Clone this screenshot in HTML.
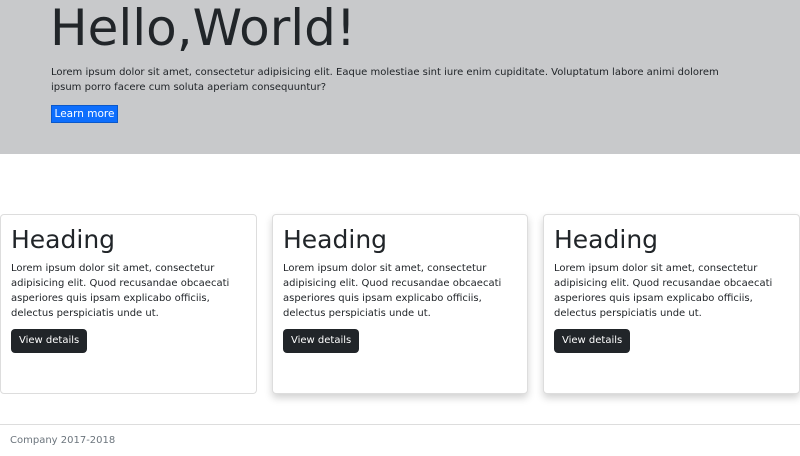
<!DOCTYPE html>
<html><head><style>
*{margin:0;padding:0;box-sizing:border-box}
body{width:800px;height:450px;overflow:hidden;font-family:"DejaVu Sans","Liberation Sans",sans-serif;color:#212529;background:#fff;font-size:10px;line-height:15px}
.hero{position:absolute;left:0;top:0;width:800px;height:154px;background:#c8c9cb}
.hero h1{position:absolute;left:50px;top:-3px;font-size:50px;line-height:62px;font-weight:400}
.hero p{position:absolute;left:51px;top:65px;width:685px}
.btn1{position:absolute;left:51px;top:105px;width:67px;height:18px;background:#0d6efd;color:#fff;font-size:10.5px;line-height:17px;text-align:center;border:1px solid #0a58ca}
.card{position:absolute;top:214px;height:180px;background:#fff;border:1px solid #ddd;border-radius:4px;padding:0 10px}
.card.s{box-shadow:0 4px 8px rgba(0,0,0,.18)}
.card h2{font-size:25px;font-weight:400;line-height:30px;margin-top:10px;margin-bottom:6px}
.card p{width:236px}
.card .b{display:inline-block;margin-top:8px;background:#212529;color:#fff;border-radius:4px;padding:0 8px;height:24px;line-height:24px}
.foot{position:absolute;top:424px;left:0;width:800px;border-top:1px solid #ddd;padding:8px 10px;color:#6c757d}
</style></head><body>
<div class="hero"><h1>Hello,World!</h1>
<p>Lorem ipsum dolor sit amet, consectetur adipisicing elit. Eaque molestiae sint iure enim cupiditate. Voluptatum labore animi dolorem ipsum porro facere cum soluta aperiam consequuntur?</p>
<div class="btn1">Learn more</div></div>
<div class="card" style="left:0;width:257px"><h2>Heading</h2><p>Lorem ipsum dolor sit amet, consectetur adipisicing elit. Quod recusandae obcaecati asperiores quis ipsam explicabo officiis, delectus perspiciatis unde ut.</p><span class="b">View details</span></div>
<div class="card s" style="left:272px;width:256px"><h2>Heading</h2><p>Lorem ipsum dolor sit amet, consectetur adipisicing elit. Quod recusandae obcaecati asperiores quis ipsam explicabo officiis, delectus perspiciatis unde ut.</p><span class="b">View details</span></div>
<div class="card s" style="left:543px;width:257px"><h2>Heading</h2><p>Lorem ipsum dolor sit amet, consectetur adipisicing elit. Quod recusandae obcaecati asperiores quis ipsam explicabo officiis, delectus perspiciatis unde ut.</p><span class="b">View details</span></div>
<div class="foot">Company 2017-2018</div>
</body></html>
